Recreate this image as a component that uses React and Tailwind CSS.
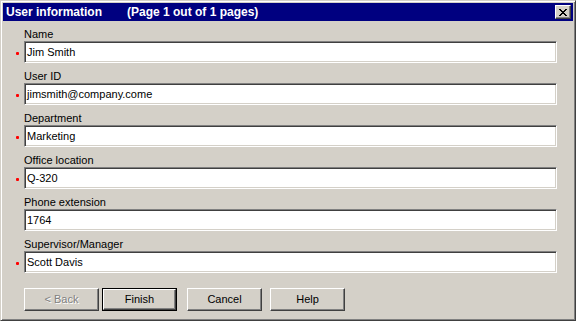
const fields = [
  { label: "Name", value: "Jim Smith", required: true },
  { label: "User ID", value: "jimsmith@company.come", required: true },
  { label: "Department", value: "Marketing", required: true },
  { label: "Office location", value: "Q-320", required: true },
  { label: "Phone extension", value: "1764", required: false },
  { label: "Supervisor/Manager", value: "Scott Davis", required: true },
];

const raised =
  "border border-t-white border-l-white border-r-[#404040] border-b-[#404040] shadow-[inset_-1px_-1px_0_#808080]";

function Field({ label, value, required }) {
  return (
    <div className="h-[42px]">
      <div className="ml-[10px] h-[13px] leading-[13px]">{label}</div>
      <div className="flex items-center">
        <div className="w-[10px] h-[22px] flex items-center">
          {required && (
            <div className="ml-[2px] mt-[2px] w-[3px] h-[3px] rounded-[1px] bg-[#ff0000]" />
          )}
        </div>
        <div className="w-[533px] h-[22px] bg-white border border-t-[#808080] border-l-[#808080] border-r-white border-b-white shadow-[inset_1px_1px_0_#404040,inset_-1px_-1px_0_#d4d0c8] flex items-center pl-[2px]">
          {value}
        </div>
      </div>
    </div>
  );
}

function Button({ children, disabled, isDefault, className = "" }) {
  if (isDefault) {
    return (
      <div className={`w-[75px] h-[23px] border border-black ${className}`}>
        <div className={`w-full h-full flex items-center justify-center ${raised}`}>
          {children}
        </div>
      </div>
    );
  }
  return (
    <div
      className={`w-[75px] h-[23px] flex items-center justify-center ${raised} ${
        disabled ? "text-[#808080] [text-shadow:1px_1px_0_#ffffff]" : ""
      } ${className}`}
    >
      {children}
    </div>
  );
}

export default function App() {
  return (
    <div
      className="w-[576px] h-[321px] bg-[#d4d0c8] text-black text-[11px] border border-t-[#d4d0c8] border-l-[#d4d0c8] border-r-[#404040] border-b-[#404040] shadow-[inset_1px_1px_0_#ffffff,inset_-1px_-1px_0_#808080] p-[2px] flex flex-col"
      style={{ fontFamily: '"Liberation Sans", Arial, sans-serif' }}
    >
      <div className="h-[18px] bg-[#000080] text-white font-bold text-[12px] flex items-center pl-[3px] pr-[2px]">
        <span className="w-[121px]">User information</span>
        <span>(Page 1 out of 1 pages)</span>
        <div className={`ml-auto w-[16px] h-[14px] bg-[#d4d0c8] flex items-center justify-center ${raised}`}>
          <svg width="8" height="7" viewBox="0 0 8 7" shapeRendering="crispEdges">
            <path
              fill="#000"
              d="M0 0h2v1h-2zM6 0h2v1h-2zM1 1h2v1h-2zM5 1h2v1h-2zM2 2h4v1h-4zM3 3h2v1h-2zM2 4h4v1h-4zM1 5h2v1h-2zM5 5h2v1h-2zM0 6h2v1h-2zM6 6h2v1h-2z"
            />
          </svg>
        </div>
      </div>
      <div className="flex-1 pl-[11px] pt-[7px]">
        {fields.map((f) => (
          <Field key={f.label} {...f} />
        ))}
        <div className="flex ml-[10px] mt-[8px]">
          <Button disabled>&lt; Back</Button>
          <Button isDefault className="ml-[3px]">Finish</Button>
          <Button className="ml-[10px]">Cancel</Button>
          <Button className="ml-[8px]">Help</Button>
        </div>
      </div>
    </div>
  );
}
